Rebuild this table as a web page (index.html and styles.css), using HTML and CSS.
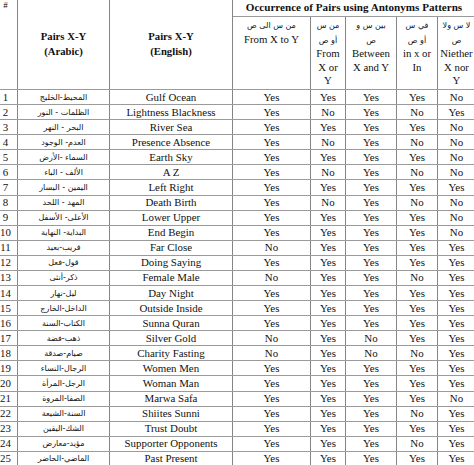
FILE: index.html
```html
<!DOCTYPE html>
<html>
<head>
<meta charset="utf-8">
<link rel="stylesheet" href="styles.css">
</head>
<body>
<table class="grid">
  <colgroup>
    <col class="c-num"><col class="c-ar"><col class="c-en"><col class="c-p1"><col class="c-p2"><col class="c-p3"><col class="c-p4"><col class="c-p5">
  </colgroup>
  <thead>
    <tr class="h-top">
      <th class="h-num" rowspan="2">#</th>
      <th class="h-pair" rowspan="2">Pairs X-Y<br>(Arabic)</th>
      <th class="h-pair" rowspan="2">Pairs X-Y<br>(English)</th>
      <th class="h-title" colspan="5">Occurrence of Pairs using Antonyms Patterns</th>
    </tr>
    <tr class="h-sub">
      <th class="h-pat"><span class="ar" dir="rtl">من س الى ص</span><br>From X to Y</th>
      <th class="h-pat"><span class="ar" dir="rtl">من س</span><br><span class="ar" dir="rtl">أو ص</span><br>From<br>X or<br>Y</th>
      <th class="h-pat"><span class="ar" dir="rtl">بين س و</span><br><span class="ar" dir="rtl">ص</span><br>Between<br>X and Y</th>
      <th class="h-pat"><span class="ar" dir="rtl">في س</span><br><span class="ar" dir="rtl">أو ص</span><br>in x or<br>In</th>
      <th class="h-pat"><span class="ar" dir="rtl">لا س ولا</span><br><span class="ar" dir="rtl">ص</span><br>Niether<br>X nor<br>Y</th>
    </tr>
  </thead>
  <tbody>
    <tr><td class="n">1</td><td class="ar" dir="rtl">المحيط-الخليج</td><td>Gulf Ocean</td><td>Yes</td><td>Yes</td><td>Yes</td><td>Yes</td><td>No</td></tr>
    <tr><td class="n">2</td><td class="ar" dir="rtl">الظلمات - النور</td><td>Lightness Blackness</td><td>Yes</td><td>No</td><td>Yes</td><td>No</td><td>Yes</td></tr>
    <tr><td class="n">3</td><td class="ar" dir="rtl">البحر - النهر</td><td>River Sea</td><td>Yes</td><td>Yes</td><td>Yes</td><td>Yes</td><td>No</td></tr>
    <tr><td class="n">4</td><td class="ar" dir="rtl">العدم- الوجود</td><td>Presence Absence</td><td>Yes</td><td>No</td><td>Yes</td><td>No</td><td>No</td></tr>
    <tr><td class="n">5</td><td class="ar" dir="rtl">السماء -الأرض</td><td>Earth Sky</td><td>Yes</td><td>Yes</td><td>Yes</td><td>Yes</td><td>No</td></tr>
    <tr><td class="n">6</td><td class="ar" dir="rtl">الألف - الباء</td><td>A Z</td><td>Yes</td><td>No</td><td>Yes</td><td>No</td><td>No</td></tr>
    <tr><td class="n">7</td><td class="ar" dir="rtl">اليمين - اليسار</td><td>Left Right</td><td>Yes</td><td>Yes</td><td>Yes</td><td>Yes</td><td>Yes</td></tr>
    <tr><td class="n">8</td><td class="ar" dir="rtl">المهد - اللحد</td><td>Death Birth</td><td>Yes</td><td>No</td><td>Yes</td><td>No</td><td>No</td></tr>
    <tr><td class="n">9</td><td class="ar" dir="rtl">الأعلى- الأسفل</td><td>Lower Upper</td><td>Yes</td><td>Yes</td><td>Yes</td><td>Yes</td><td>No</td></tr>
    <tr><td class="n">10</td><td class="ar" dir="rtl">البداية- النهاية</td><td>End Begin</td><td>Yes</td><td>Yes</td><td>Yes</td><td>Yes</td><td>No</td></tr>
    <tr><td class="n">11</td><td class="ar" dir="rtl">قريب-بعيد</td><td>Far Close</td><td>No</td><td>Yes</td><td>Yes</td><td>Yes</td><td>Yes</td></tr>
    <tr><td class="n">12</td><td class="ar" dir="rtl">قول-فعل</td><td>Doing Saying</td><td>Yes</td><td>Yes</td><td>Yes</td><td>Yes</td><td>Yes</td></tr>
    <tr><td class="n">13</td><td class="ar" dir="rtl">ذكر-أنثى</td><td>Female Male</td><td>No</td><td>Yes</td><td>Yes</td><td>No</td><td>Yes</td></tr>
    <tr><td class="n">14</td><td class="ar" dir="rtl">ليل-نهار</td><td>Day Night</td><td>Yes</td><td>Yes</td><td>Yes</td><td>Yes</td><td>Yes</td></tr>
    <tr><td class="n">15</td><td class="ar" dir="rtl">الداخل-الخارج</td><td>Outside Inside</td><td>Yes</td><td>Yes</td><td>Yes</td><td>Yes</td><td>Yes</td></tr>
    <tr><td class="n">16</td><td class="ar" dir="rtl">الكتاب-السنة</td><td>Sunna Quran</td><td>Yes</td><td>Yes</td><td>Yes</td><td>Yes</td><td>Yes</td></tr>
    <tr><td class="n">17</td><td class="ar" dir="rtl">ذهب-فضة</td><td>Silver Gold</td><td>No</td><td>Yes</td><td>No</td><td>Yes</td><td>Yes</td></tr>
    <tr><td class="n">18</td><td class="ar" dir="rtl">صيام-صدقة</td><td>Charity Fasting</td><td>No</td><td>Yes</td><td>No</td><td>No</td><td>Yes</td></tr>
    <tr><td class="n">19</td><td class="ar" dir="rtl">الرجال-النساء</td><td>Women Men</td><td>Yes</td><td>Yes</td><td>Yes</td><td>Yes</td><td>Yes</td></tr>
    <tr><td class="n">20</td><td class="ar" dir="rtl">الرجل-المرأة</td><td>Woman Man</td><td>Yes</td><td>Yes</td><td>Yes</td><td>Yes</td><td>Yes</td></tr>
    <tr><td class="n">21</td><td class="ar" dir="rtl">الصفا-المروة</td><td>Marwa Safa</td><td>Yes</td><td>Yes</td><td>Yes</td><td>Yes</td><td>No</td></tr>
    <tr><td class="n">22</td><td class="ar" dir="rtl">السنة-الشيعة</td><td>Shiites Sunni</td><td>Yes</td><td>Yes</td><td>Yes</td><td>No</td><td>Yes</td></tr>
    <tr><td class="n">23</td><td class="ar" dir="rtl">الشك-اليقين</td><td>Trust Doubt</td><td>Yes</td><td>Yes</td><td>Yes</td><td>Yes</td><td>Yes</td></tr>
    <tr><td class="n">24</td><td class="ar" dir="rtl">مؤيد-معارض</td><td>Supporter Opponents</td><td>Yes</td><td>Yes</td><td>Yes</td><td>No</td><td>Yes</td></tr>
    <tr><td class="n">25</td><td class="ar" dir="rtl">الماضي-الحاضر</td><td>Past Present</td><td>Yes</td><td>Yes</td><td>Yes</td><td>Yes</td><td>Yes</td></tr>
  </tbody>
</table>
</body>
</html>
```

FILE: styles.css
```css
html, body {
  margin: 0;
  padding: 0;
  background: #fff;
  overflow: hidden;
}
body {
  font-family: "Liberation Serif", "Times New Roman", serif;
  color: #111;
}
.grid {
  border-collapse: collapse;
  table-layout: fixed;
  width: 478px;
  margin: -3px 0 0 -3px;
  font-size: 10.9px;
}
.c-num { width: 20px; }
.c-ar { width: 92px; }
.c-en { width: 123px; }
.c-p1 { width: 78px; }
.c-p2 { width: 35px; }
.c-p3 { width: 51px; }
.c-p4 { width: 41px; }
.c-p5 { width: 38px; }
.grid th, .grid td {
  border-top: 1px solid #9a9a9a;
  border-bottom: 1px solid #9a9a9a;
  border-left: 1px solid #858585;
  border-right: 1px solid #858585;
  padding: 0;
  text-align: center;
  white-space: nowrap;
  overflow: hidden;
}
.grid tbody tr { height: 15.08px; }
.grid tbody td {
  line-height: 13px;
  vertical-align: middle;
}
.grid td.n {
  padding-right: 4px;
}
.ar {
  font-family: "DejaVu Sans", sans-serif;
  font-size: 8px;
  font-weight: normal;
}
.h-top { height: 19px; }
.h-sub { height: 73px; }
.h-num {
  vertical-align: top;
  font-weight: normal;
  font-size: 9px;
  padding-right: 4px !important;
  padding-top: 2px !important;
}
.h-pair {
  font-weight: bold;
  font-size: 10.7px;
  line-height: 15px;
  vertical-align: middle;
}
.h-title {
  font-weight: bold;
  font-size: 11.1px;
  line-height: 15px;
  vertical-align: middle;
}
.h-pat {
  font-weight: normal;
  font-size: 10.8px;
  line-height: 13.5px;
  vertical-align: top;
  padding-top: 1px !important;
}
```
